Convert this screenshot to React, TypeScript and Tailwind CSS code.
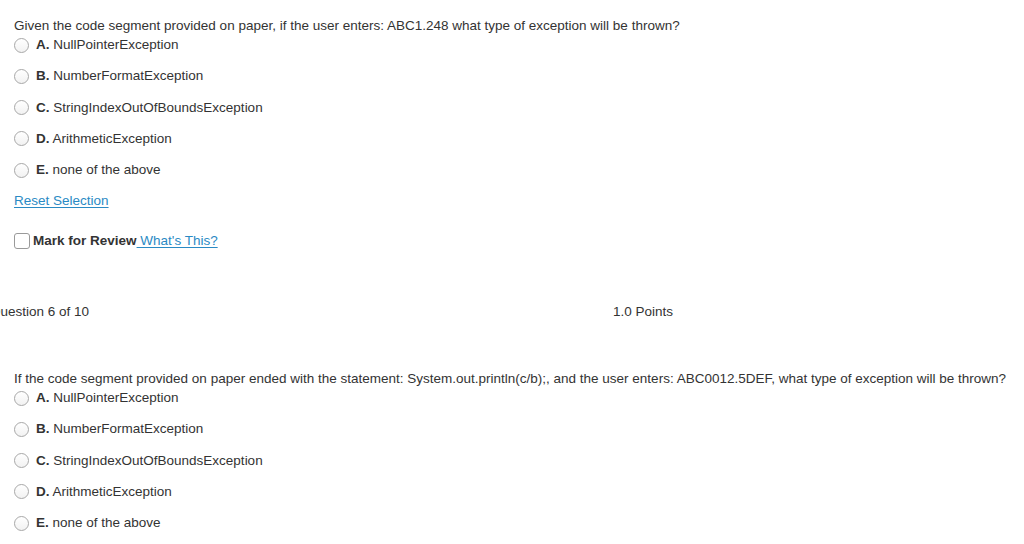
import React from "react";

const options = [
  ["A.", "NullPointerException"],
  ["B.", "NumberFormatException"],
  ["C.", "StringIndexOutOfBoundsException"],
  ["D.", "ArithmeticException"],
  ["E.", "none of the above"],
];

function Radio() {
  return (
    <span className="inline-block w-[15px] h-[15px] rounded-full border border-[#a8a8a8] bg-gradient-to-b from-white to-[#f2f2f2] shrink-0" />
  );
}

function Options() {
  return (
    <div className="flex flex-col gap-[15.25px]">
      {options.map(([l, t]) => (
        <div key={l} className="flex items-center h-4 gap-[7px]">
          <Radio />
          <span>
            <b className="font-bold">{l}</b> {t}
          </span>
        </div>
      ))}
    </div>
  );
}

export default function App() {
  return (
    <div
      className="w-[1024px] h-[544px] overflow-hidden bg-white text-[#333333] text-[13.5px] leading-4"
      style={{ fontFamily: '"Liberation Sans", Arial, sans-serif' }}
    >
      <div className="pl-[14px] pt-[18px]">
        <div className="h-4">
          Given the code segment provided on paper, if the user enters: ABC1.248 what type of exception will be thrown?
        </div>
        <div className="mt-[3px]">
          <Options />
        </div>
        <div className="mt-[15px] h-4">
          <a className="text-[#2a8ac4] underline underline-offset-2">Reset Selection</a>
        </div>
        <div className="mt-6 h-4 flex items-center">
          <span className="inline-block w-4 h-4 rounded-[3px] border border-[#9a9a9a] bg-white shrink-0" />
          <span className="ml-[3px] font-bold">Mark for Review</span>
          <a className="text-[#2a8ac4] underline underline-offset-2 whitespace-pre"> What's This?</a>
        </div>
      </div>
      <div className="mt-[55px] -ml-[10px] w-[683px] flex justify-between h-4">
        <span>Question 6 of 10</span>
        <span>1.0 Points</span>
      </div>
      <div className="pl-[14px]">
        <div className="mt-[51px] h-4">
          If the code segment provided on paper ended with the statement: System.out.println(c/b);, and the user enters: ABC0012.5DEF, what type of exception will be thrown?
        </div>
        <div className="mt-[3px]">
          <Options />
        </div>
      </div>
    </div>
  );
}
